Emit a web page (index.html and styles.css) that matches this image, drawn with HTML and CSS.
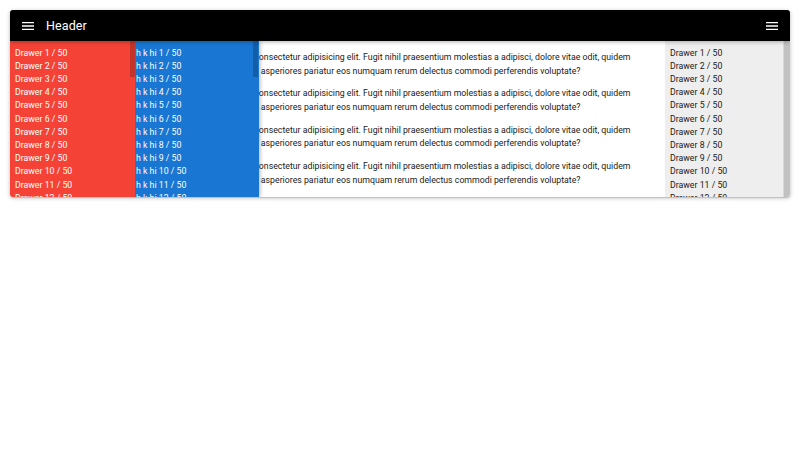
FILE: index.html
```html
<!DOCTYPE html>
<html lang="en">
<head>
<meta charset="utf-8">
<title>Layout</title>
<link rel="stylesheet" href="styles.css">
</head>
<body>
<div class="layout">
  <header class="toolbar">
    <svg class="icon" viewBox="0 0 24 24" width="16" height="16"><path d="M3 18h18v-2H3v2zm0-5h18v-2H3v2zm0-7v2h18V6H3z" fill="#fff"/></svg>
    <div class="title">Header</div>
    <div class="spacer"></div>
    <svg class="icon" viewBox="0 0 24 24" width="16" height="16"><path d="M3 18h18v-2H3v2zm0-5h18v-2H3v2zm0-7v2h18V6H3z" fill="#fff"/></svg>
  </header>
  <div class="body">
    <aside class="drawer red">
      <ul class="list" id="redList"></ul>
      <div class="thumb"></div>
    </aside>
    <main class="page">
      <div class="content" id="content"></div>
      <aside class="overlay blue">
        <ul class="list" id="blueList"></ul>
        <div class="thumb"></div>
      </aside>
    </main>
    <aside class="drawer grey">
      <ul class="list" id="greyList"></ul>
      <div class="track"></div>
    </aside>
  </div>
</div>
<script src="app.js"></script>
</body>
</html>
```
FILE: styles.css
```css
* { box-sizing: border-box; }
html, body { margin: 0; padding: 0; background: #fff; }
body {
  font-family: Roboto, "Liberation Sans", sans-serif;
  padding: 10px;
}
.layout {
  width: 780px;
  height: 187px;
  border-radius: 3px;
  overflow: hidden;
  display: flex;
  flex-direction: column;
  box-shadow: 0 1px 4px rgba(0,0,0,0.25), 0 1px 1px rgba(0,0,0,0.12);
}
.toolbar {
  height: 31px;
  flex: none;
  background: #000;
  color: #fff;
  display: flex;
  align-items: center;
  padding: 0 10px;
  position: relative;
  z-index: 3;
  box-shadow: 0 1px 4px rgba(0,0,0,0.3);
}
.icon { display: block; flex: none; }
.title {
  margin-left: 10px;
  font-size: 12.5px;
  letter-spacing: 0.1px;
}
.spacer { flex: 1; }
.body {
  flex: 1;
  display: flex;
  min-height: 0;
}
.list {
  list-style: none;
  margin: 0;
  padding: 5.5px 0 0 5px;
  font-size: 8.75px;
  line-height: 13.2px;
}
.drawer {
  width: 125px;
  flex: none;
  position: relative;
  overflow: hidden;
}
.red { background: #f44336; color: #fff; }
.blue { background: #1976d2; color: #fff; }
.grey { background: #eeeeee; color: #1a1a1a; }
.thumb {
  position: absolute;
  top: 0;
  right: 0;
  width: 5px;
  height: 36px;
  background: rgba(0,0,0,0.2);
}
.track {
  position: absolute;
  top: 0;
  right: 0;
  bottom: 0;
  width: 7px;
  background: #c2c2c2;
  border-left: 1px solid #d8d8d8;
}
.page {
  flex: 1;
  position: relative;
  overflow: hidden;
  background: #fff;
}
.content {
  padding: 10px;
  font-size: 8.75px;
  line-height: 13.6px;
  color: #1a1a1a;
}
.content p { margin: 0 0 9.2px; }
.overlay {
  position: absolute;
  top: 0;
  left: 0;
  bottom: 0;
  width: 124px;
  overflow: hidden;
  z-index: 2;
  box-shadow: 1px 0 4px rgba(0,0,0,0.3);
}
.overlay .list { padding-left: 1px; }
.overlay .thumb { right: 1px; }
```
FILE: app.js
```js
function fill(id, label) {
  var ul = document.getElementById(id);
  var html = '';
  for (var i = 1; i <= 50; i++) html += '<li>' + label + ' ' + i + ' / 50</li>';
  ul.innerHTML = html;
}
fill('redList', 'Drawer');
fill('blueList', 'h k hi');
fill('greyList', 'Drawer');
var text = 'Lorem ipsum dolor sit amet consectetur adipisicing elit. Fugit nihil praesentium molestias a adipisci, dolore vitae odit, quidem consequatur optio voluptates asperiores pariatur eos numquam rerum delectus commodi perferendis voluptate?';
var c = document.getElementById('content');
var h = '';
for (var j = 0; j < 6; j++) h += '<p>' + text + '</p>';
c.innerHTML = h;
```
